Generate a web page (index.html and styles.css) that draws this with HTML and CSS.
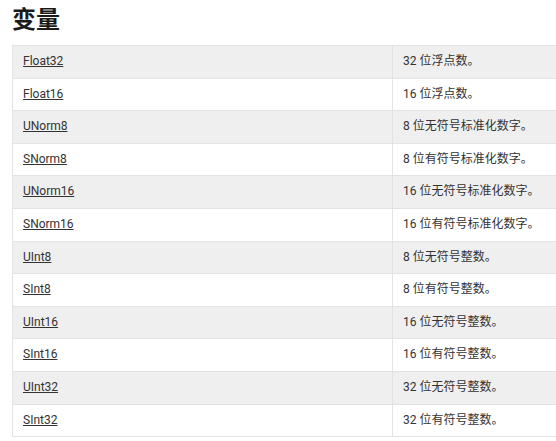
FILE: index.html
```html
<!DOCTYPE html>
<html lang="zh">
<head>
<meta charset="utf-8">
<link rel="stylesheet" href="styles.css">
</head>
<body>
<h2 class="title">变量</h2>
<div class="wrap">
<table class="vars">
<tbody>
<tr><td class="name"><a href="#">Float32</a></td><td class="desc">32 位浮点数。</td></tr>
<tr><td class="name"><a href="#">Float16</a></td><td class="desc">16 位浮点数。</td></tr>
<tr><td class="name"><a href="#">UNorm8</a></td><td class="desc">8 位无符号标准化数字。</td></tr>
<tr><td class="name"><a href="#">SNorm8</a></td><td class="desc">8 位有符号标准化数字。</td></tr>
<tr><td class="name"><a href="#">UNorm16</a></td><td class="desc">16 位无符号标准化数字。</td></tr>
<tr><td class="name"><a href="#">SNorm16</a></td><td class="desc">16 位有符号标准化数字。</td></tr>
<tr><td class="name"><a href="#">UInt8</a></td><td class="desc">8 位无符号整数。</td></tr>
<tr><td class="name"><a href="#">SInt8</a></td><td class="desc">8 位有符号整数。</td></tr>
<tr><td class="name"><a href="#">UInt16</a></td><td class="desc">16 位无符号整数。</td></tr>
<tr><td class="name"><a href="#">SInt16</a></td><td class="desc">16 位有符号整数。</td></tr>
<tr><td class="name"><a href="#">UInt32</a></td><td class="desc">32 位无符号整数。</td></tr>
<tr><td class="name"><a href="#">SInt32</a></td><td class="desc">32 位有符号整数。</td></tr>
</tbody>
</table>
</div>
</body>
</html>
```
FILE: styles.css
```css
html, body {
  margin: 0;
  padding: 0;
  background: #fff;
}
body {
  padding: 0 0 0 12px;
  font-family: Roboto, "Noto Sans CJK SC", sans-serif;
  color: #333;
  font-size: 12px;
}
.title {
  margin: 4px 0 0 0;
  font-size: 24px;
  line-height: 32px;
  font-weight: 700;
  color: #1a1a1a;
}
.wrap {
  margin-top: 9px;
  overflow: hidden;
}
.vars {
  border-collapse: collapse;
  width: 560px;
  border: 1px solid #e3e3e3;
}
.vars td {
  border: 1px solid #e3e3e3;
  padding: 8px 10px;
  line-height: 15.6px;
  vertical-align: middle;
}
.vars td.name {
  width: 359px;
}
.vars tr:nth-child(odd) td {
  background: #efefef;
}
.vars a {
  color: #333;
  text-decoration: underline;
}
```
